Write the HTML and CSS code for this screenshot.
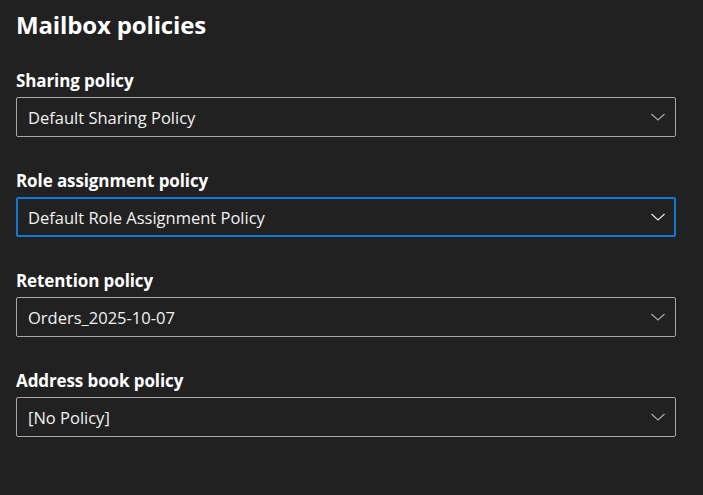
FILE: index.html
```html
<!DOCTYPE html>
<html lang="en">
<head>
<meta charset="utf-8">
<title>Mailbox policies</title>
<link rel="stylesheet" href="styles.css">
</head>
<body>
<main class="panel">
  <h1 class="title">Mailbox policies</h1>
  <div class="field">
    <label class="label">Sharing policy</label>
    <div class="select">
      <span class="value">Default Sharing Policy</span>
      <svg class="chev" width="16" height="16" viewBox="0 0 16 16"><path d="M1.5 5 8 11 14.5 5" fill="none" stroke="currentColor" stroke-width="1.2"/></svg>
    </div>
  </div>
  <div class="field">
    <label class="label">Role assignment policy</label>
    <div class="select focused">
      <span class="value">Default Role Assignment Policy</span>
      <svg class="chev" width="16" height="16" viewBox="0 0 16 16"><path d="M1.5 5 8 11 14.5 5" fill="none" stroke="currentColor" stroke-width="1.2"/></svg>
    </div>
  </div>
  <div class="field">
    <label class="label">Retention policy</label>
    <div class="select">
      <span class="value">Orders_2025-10-07</span>
      <svg class="chev" width="16" height="16" viewBox="0 0 16 16"><path d="M1.5 5 8 11 14.5 5" fill="none" stroke="currentColor" stroke-width="1.2"/></svg>
    </div>
  </div>
  <div class="field">
    <label class="label">Address book policy</label>
    <div class="select">
      <span class="value">[No Policy]</span>
      <svg class="chev" width="16" height="16" viewBox="0 0 16 16"><path d="M1.5 5 8 11 14.5 5" fill="none" stroke="currentColor" stroke-width="1.2"/></svg>
    </div>
  </div>
</main>
</body>
</html>
```
FILE: styles.css
```css
html, body {
  margin: 0;
  background: #212121;
  height: 100%;
}
body {
  font-family: "Open Sans", "Noto Sans", sans-serif;
  color: #ffffff;
}
.panel {
  padding: 9px 27px 0 16px;
  display: flex;
  flex-direction: column;
}
.title {
  margin: 0 0 30px 0;
  font-size: 24px;
  line-height: 32px;
  font-weight: 700;
  letter-spacing: -0.15px;
}
.field {
  display: flex;
  flex-direction: column;
  margin-bottom: 34px;
}
.label {
  font-size: 17px;
  line-height: 20px;
  font-weight: 700;
  margin-bottom: 6px;
  letter-spacing: -0.1px;
}
.select {
  box-sizing: border-box;
  height: 40px;
  border: 1px solid #a8a8a8;
  border-radius: 2px;
  display: flex;
  align-items: center;
  padding: 0 9px 0 11px;
  color: #a8a8a8;
}
.select.focused {
  border: 2px solid #0f7ad6;
  padding: 0 8px 0 10px;
  color: #e8e8e8;
}
.value {
  flex: 1;
  font-size: 16.5px;
  color: #f2f2f2;
}
.chev {
  display: block;
}
```
